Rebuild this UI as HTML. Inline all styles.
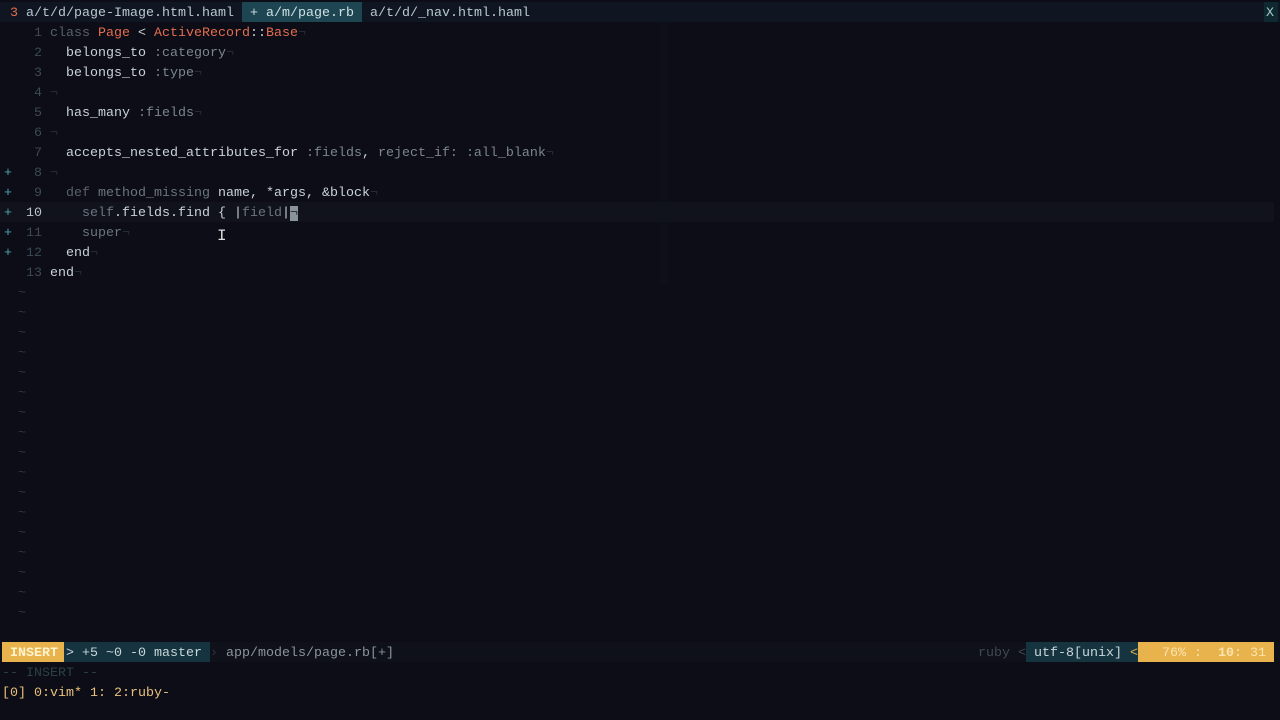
<!DOCTYPE html>
<html><head><meta charset="utf-8"><style>
*{margin:0;padding:0}
body{width:1280px;height:720px;background:#0c0d16;overflow:hidden;position:relative;font-family:"Liberation Mono",monospace;font-size:13.33px;color:#c9d3d6}
.l{position:absolute;left:0;height:20px;line-height:24px;white-space:nowrap;width:1280px;overflow:visible}
.l span{white-space:pre}
.n{position:absolute;width:42px;left:0;text-align:right;color:#3c4a55}
.s{position:absolute;left:4px;color:#4fa3b0}
.c{position:absolute;left:50px}
.k{color:#56606b}.r{color:#e36d4f}.y{color:#7b8791}.e{color:#2a2f3a}.g{color:#6a7580}
.t{color:#2d3a44;position:absolute;left:18px}
.c span{position:static}
.bg{position:absolute;top:0;height:20px}
</style></head><body>
<div class="l" style="top:2px;background:#0f1622"><span style="position:absolute;left:10px;color:#e36d4f">3</span><span style="position:absolute;left:26px;color:#b8c9cf">a/t/d/page-Image.html.haml</span><span class="bg" style="left:242px;width:120px;background:#1d4552"></span><span style="position:absolute;left:250px;color:#cfe0e4">+ a/m/page.rb</span><span style="position:absolute;left:370px;color:#b8c9cf">a/t/d/_nav.html.haml</span><span class="bg" style="left:1264px;width:14px;background:#0e2a30"></span><span style="position:absolute;left:1266px;color:#a8c8c8">X</span></div>
<div style="position:absolute;left:660px;top:22px;width:8px;height:262px;background:#0e1019"></div>
<div style="position:absolute;left:0;top:202px;width:1274px;height:20px;background:#11131c"></div>
<div class="l" style="top:22px"><span class="n">1</span><span class="c"><span class="k">class</span> <span class="r">Page</span> &lt; <span class="r">ActiveRecord</span>::<span class="r">Base</span><span class="e">¬</span></span></div>
<div class="l" style="top:42px"><span class="n">2</span><span class="c">  belongs_to <span class="y">:category</span><span class="e">¬</span></span></div>
<div class="l" style="top:62px"><span class="n">3</span><span class="c">  belongs_to <span class="y">:type</span><span class="e">¬</span></span></div>
<div class="l" style="top:82px"><span class="n">4</span><span class="c"><span class="e">¬</span></span></div>
<div class="l" style="top:102px"><span class="n">5</span><span class="c">  has_many <span class="y">:fields</span><span class="e">¬</span></span></div>
<div class="l" style="top:122px"><span class="n">6</span><span class="c"><span class="e">¬</span></span></div>
<div class="l" style="top:142px"><span class="n">7</span><span class="c">  accepts_nested_attributes_for <span class="y">:fields</span>, <span class="y">reject_if:</span> <span class="y">:all_blank</span><span class="e">¬</span></span></div>
<div class="l" style="top:162px"><span class="s">+</span><span class="n">8</span><span class="c"><span class="e">¬</span></span></div>
<div class="l" style="top:182px"><span class="s">+</span><span class="n">9</span><span class="c">  <span class="k">def</span> <span class="g">method_missing</span> name, *args, &amp;block<span class="e">¬</span></span></div>
<div class="l" style="top:202px"><span class="s">+</span><span class="n" style="color:#b8c4c8">10</span><span class="c">    <span class="g">self</span>.fields.find { |<span class="g">field</span>|<span style="background:#8a9399;color:#222">¬</span></span></div>
<div class="l" style="top:222px"><span class="s">+</span><span class="n">11</span><span class="c">    <span class="g">super</span><span class="e">¬</span></span></div>
<div class="l" style="top:242px"><span class="s">+</span><span class="n">12</span><span class="c">  end<span class="e">¬</span></span></div>
<div class="l" style="top:262px"><span class="n">13</span><span class="c">end<span class="e">¬</span></span></div>
<div class="l" style="top:282px"><span class="t">~</span></div><div class="l" style="top:302px"><span class="t">~</span></div><div class="l" style="top:322px"><span class="t">~</span></div><div class="l" style="top:342px"><span class="t">~</span></div><div class="l" style="top:362px"><span class="t">~</span></div><div class="l" style="top:382px"><span class="t">~</span></div><div class="l" style="top:402px"><span class="t">~</span></div><div class="l" style="top:422px"><span class="t">~</span></div><div class="l" style="top:442px"><span class="t">~</span></div><div class="l" style="top:462px"><span class="t">~</span></div><div class="l" style="top:482px"><span class="t">~</span></div><div class="l" style="top:502px"><span class="t">~</span></div><div class="l" style="top:522px"><span class="t">~</span></div><div class="l" style="top:542px"><span class="t">~</span></div><div class="l" style="top:562px"><span class="t">~</span></div><div class="l" style="top:582px"><span class="t">~</span></div><div class="l" style="top:602px"><span class="t">~</span></div>
<div style="position:absolute;left:217px;top:227px;color:#ddd;font-size:16px">I</div>
<div class="l" style="top:642px;background:#0f111a"><span class="bg" style="left:2px;width:62px;background:#e8b34c"></span><span style="position:absolute;left:10px;color:#fff4d0;font-weight:bold">INSERT</span><span class="bg" style="left:64px;width:146px;background:#15343f"></span><span style="position:absolute;left:66px;color:#c9d6da">&gt; +5 ~0 -0 master</span><span style="position:absolute;left:210px;color:#2a3440">›</span><span style="position:absolute;left:226px;color:#8a949b">app/models/page.rb[+]</span><span style="position:absolute;left:978px;color:#3e4852">ruby &lt;</span><span class="bg" style="left:1026px;width:112px;background:#15343f"></span><span style="position:absolute;left:1034px;color:#c9d6da">utf-8[unix] <span style="color:#e8b34c">&lt;</span></span><span class="bg" style="left:1138px;width:136px;background:#e8b34c"></span><span style="position:absolute;left:1154px;color:#fbe4b0"> 76% :  <b>10</b>: 31</span></div>
<div class="l" style="top:662px;color:#2b4048;left:2px">-- INSERT --</div>
<div class="l" style="top:682px;color:#e8c07c;left:2px">[0] 0:vim* 1:  2:ruby-</div>
</body></html>
